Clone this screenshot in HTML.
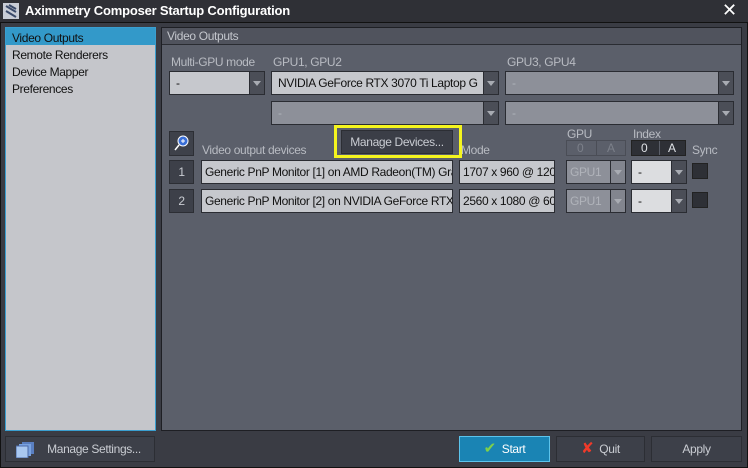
<!DOCTYPE html><html><head><style>
*{box-sizing:border-box;margin:0;padding:0}
body{width:748px;height:468px;background:#3a3c44;font-family:"Liberation Sans",sans-serif;font-size:12px;letter-spacing:-0.35px;position:relative;overflow:hidden;color:#111}
.a{position:absolute}
.cb{position:absolute;background:#c6c8cd;border:1px solid #2a2c32;padding:4px 3px;font-size:12px;white-space:nowrap;overflow:hidden}
.cb.g{background:#8d9099;color:#b0b3ba}
.ar{position:absolute;top:0;right:0;bottom:0;width:15px;background:#4b4e57;border-left:1px solid #2a2c32}
.ar:after{content:"";position:absolute;left:3px;top:9px;border-left:4px solid transparent;border-right:4px solid transparent;border-top:5px solid #a8abb2}
.lb{position:absolute;color:#b8bbc2;font-size:12px}
.btn{position:absolute;background:#3d4049;border:1px solid #2c2e34;color:#c9ccd2;text-align:center;font-size:12px}
</style></head><body>
<div class="a" style="left:0;top:0;width:748px;height:22px;background:#2f3036"></div>
<svg class="a" style="left:3px;top:3px" width="16" height="16"><rect width="16" height="16" fill="#c8ccd6"/><path d="M3 3 L13 9 M3 8 L13 14 M6 2 L13 6" stroke="#3a4a6a" stroke-width="2"/></svg>
<div class="a" style="left:25px;top:3px;color:#fff;font-weight:bold;font-size:13px;letter-spacing:-0.2px">Aximmetry Composer Startup Configuration</div>
<div class="a" style="left:722px;top:0px;color:#fff;font-size:18px">✕</div>
<div class="a" style="left:0;top:22px;width:748px;height:446px;border:1px solid #111"></div>
<div class="a" style="left:5px;top:27px;width:151px;height:404px;background:#c5c6cb;border:1px solid #3a9fd0"></div>
<div class="a" style="left:6px;top:28px;width:149px;height:17px;background:#3399c9"></div>
<div class="a" style="left:12px;top:30px;line-height:17px">Video Outputs<br>Remote Renderers<br>Device Mapper<br>Preferences</div>
<div class="a" style="left:161px;top:27px;width:581px;height:404px;background:#5b5f6a;border:1px solid #1e1f24"></div>
<div class="a" style="left:162px;top:28px;width:579px;height:17px;background:#50535d;border-bottom:1px solid #2a2c32;color:#c3c6cc;padding:1px 5px">Video Outputs</div>
<div class="lb" style="left:171px;top:55px">Multi-GPU mode</div>
<div class="lb" style="left:273px;top:55px">GPU1, GPU2</div>
<div class="lb" style="left:507px;top:55px">GPU3, GPU4</div>
<div class="cb" style="left:169px;top:71px;width:96px;height:24px;padding-left:6px">-<div class="ar"></div></div>
<div class="cb" style="left:271px;top:71px;width:228px;height:24px;padding-left:6px">NVIDIA GeForce RTX 3070 Ti Laptop G<div class="ar"></div></div>
<div class="cb g" style="left:505px;top:71px;width:229px;height:24px;padding-left:6px">-<div class="ar"></div></div>
<div class="cb g" style="left:271px;top:101px;width:228px;height:24px;padding-left:6px">-<div class="ar"></div></div>
<div class="cb g" style="left:505px;top:101px;width:229px;height:24px;padding-left:6px">-<div class="ar"></div></div>
<div class="btn" style="left:169px;top:131px;width:25px;height:25px;background:#3e414a"><svg width="23" height="23"><circle cx="13" cy="9" r="5" fill="#3a6fd8" stroke="#fff" stroke-width="1"/><path d="M11 9h4M13 7v4" stroke="#fff"/><path d="M9 13L5 18" stroke="#fff" stroke-width="1.5"/></svg></div>
<div class="lb" style="left:202px;top:143px">Video output devices</div>
<div class="lb" style="left:461px;top:143px">Mode</div>
<div class="lb" style="left:567px;top:127px">GPU</div>
<div class="lb" style="left:633px;top:127px">Index</div>
<div class="lb" style="left:692px;top:143px">Sync</div>
<div class="a" style="left:566px;top:140px;width:60px;height:16px;border:1px solid #4a4d56;color:#7c808a;font-size:12px"><span class="a" style="left:10px;top:0">0</span><span class="a" style="left:29px;top:0;width:1px;height:14px;background:#4a4d56"></span><span class="a" style="left:40px;top:0">A</span></div>
<div class="a" style="left:631px;top:140px;width:55px;height:16px;background:#2e3036;border:1px solid #222;color:#dfe2e6;font-size:12px"><span class="a" style="left:9px;top:0">0</span><span class="a" style="left:27px;top:0;width:1px;height:14px;background:#5a5e68"></span><span class="a" style="left:36px;top:0">A</span></div>
<div class="a" style="left:334px;top:125px;width:128px;height:33px;border:3px solid #f5f51e"></div>
<div class="btn" style="left:341px;top:130px;width:112px;height:24px;line-height:22px;background:#3b3e47">Manage Devices...</div>
<div class="btn" style="left:169px;top:160px;width:25px;height:24px;line-height:22px">1</div>
<div class="cb" style="left:201px;top:160px;width:252px;height:24px">Generic PnP Monitor [1] on AMD Radeon(TM) Grap</div>
<div class="cb" style="left:459px;top:160px;width:96px;height:24px">1707 x 960 @ 120</div>
<div class="cb g" style="left:566px;top:160px;width:60px;height:24px">GPU1<div class="ar" style="background:#82858e"></div></div>
<div class="cb" style="left:631px;top:160px;width:56px;height:24px;background:#dcdde0;padding-left:6px">-<div class="ar"></div></div>
<div class="a" style="left:692px;top:163px;width:16px;height:16px;background:#2e3036;border:1px solid #222"></div>
<div class="btn" style="left:169px;top:189px;width:25px;height:24px;line-height:22px">2</div>
<div class="cb" style="left:201px;top:189px;width:252px;height:24px">Generic PnP Monitor [2] on NVIDIA GeForce RTX 3</div>
<div class="cb" style="left:459px;top:189px;width:96px;height:24px">2560 x 1080 @ 60</div>
<div class="cb g" style="left:566px;top:189px;width:60px;height:24px">GPU1<div class="ar" style="background:#82858e"></div></div>
<div class="cb" style="left:631px;top:189px;width:56px;height:24px;background:#dcdde0;padding-left:6px">-<div class="ar"></div></div>
<div class="a" style="left:692px;top:192px;width:16px;height:16px;background:#2e3036;border:1px solid #222"></div>
<div class="btn" style="left:5px;top:436px;width:150px;height:26px;line-height:24px;padding-left:28px">Manage Settings...</div>
<svg class="a" style="left:16px;top:441px" width="20" height="17"><rect x="6" y="1" width="12" height="12" fill="#5a7fc0"/><rect x="3" y="3" width="12" height="12" fill="#7aa3e0"/><rect x="0" y="5" width="12" height="12" fill="#a9c8f0" stroke="#4a6aa8"/></svg>
<div class="btn" style="left:459px;top:436px;width:91px;height:26px;line-height:24px;background:#1a84b4;border-color:#5cc4ec;color:#fff"><span style="color:#7fd04a;font-size:15px">✔</span>&nbsp; Start</div>
<div class="btn" style="left:556px;top:436px;width:89px;height:26px;line-height:24px"><span style="color:#f03a2a;font-size:15px">✘</span>&nbsp; Quit</div>
<div class="btn" style="left:651px;top:436px;width:91px;height:26px;line-height:24px">Apply</div>
</body></html>
